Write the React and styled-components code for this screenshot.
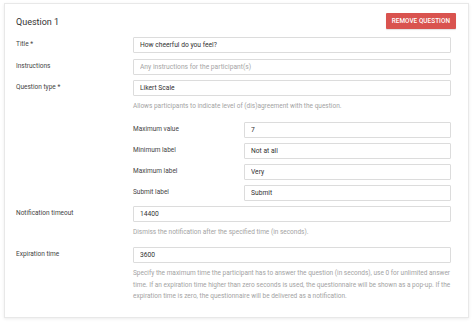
import React from 'react'
import styled, { createGlobalStyle } from 'styled-components'

const GlobalStyle = createGlobalStyle`
	body {
		margin: 0;
		background: #fff;
		font-family: Roboto, "Liberation Sans", sans-serif;
		color: #333;
	}
	* {
		box-sizing: border-box;
	}
`

const nested = [
	{ label: 'Maximum value', value: '7' },
	{ label: 'Minimum label', value: 'Not at all' },
	{ label: 'Maximum label', value: 'Very' },
	{ label: 'Submit label', value: 'Submit' },
]

const App = () => {
	return (
		<Page>
			<GlobalStyle />
			<Card>
				<Header>
					<Title>Question 1</Title>
					<RemoveButton>REMOVE QUESTION</RemoveButton>
				</Header>
				<Fields>
					<Field>
						<Label>Title *</Label>
						<Control>
							<Input defaultValue="How cheerful do you feel?" />
						</Control>
					</Field>
					<Field>
						<Label>Instructions</Label>
						<Control>
							<Input placeholder="Any instructions for the participant(s)" />
						</Control>
					</Field>
					<Field>
						<Label>Question type *</Label>
						<Control>
							<Input defaultValue="Likert Scale" />
							<Help>Allows participants to indicate level of (dis)agreement with the question.</Help>
							<Nested>
								{ nested.map((item, i) => (
									<NestedRow key={ 'n' + i }>
										<Label>{ item.label }</Label>
										<Input defaultValue={ item.value } />
									</NestedRow>
								)) }
							</Nested>
						</Control>
					</Field>
					<Field>
						<Label>Notification timeout</Label>
						<Control>
							<Input defaultValue="14400" />
							<Help>Dismiss the notification after the specified time (in seconds).</Help>
						</Control>
					</Field>
					<Field>
						<Label>Expiration time</Label>
						<Control>
							<Input defaultValue="3600" />
							<Help $multi>
								Specify the maximum time the participant has to answer the question (in seconds), use 0 for unlimited answer time. If an expiration time higher than zero seconds is used, the questionnaire will be shown as a pop-up. If the expiration time is zero, the questionnaire will be delivered as a notification.
							</Help>
						</Control>
					</Field>
				</Fields>
			</Card>
		</Page>
	)
}

export default App

const Page = styled.div`
	padding: 3px 5px 4px 4px;
`

const Card = styled.div`
	background: #fff;
	border: 1px solid #e8e8e8;
	box-shadow: 0 1px 3px rgba(0, 0, 0, 0.08);
	padding: 9px 17px 14px 11px;
`

const Header = styled.div`
	display: flex;
	align-items: center;
	justify-content: space-between;
	height: 16px;
	margin-right: -5px;
	margin-bottom: 8px;
`

const Title = styled.div`
	font-size: 9px;
	color: #333;
	padding-top: 2px;
`

const RemoveButton = styled.button`
	height: 16px;
	padding: 0 6px;
	border: 0;
	border-radius: 1px;
	background: #d9534f;
	color: #fff;
	font-family: Roboto, "Liberation Sans", sans-serif;
	font-size: 6.4px;
	font-weight: 500;
	letter-spacing: 0.05px;
	box-shadow: 0 1px 1px rgba(0, 0, 0, 0.12);
`

const Fields = styled.div`
	display: flex;
	flex-direction: column;
	gap: 5.5px;
`

const Field = styled.div`
	display: grid;
	grid-template-columns: 117px 1fr;
`

const Label = styled.div`
	font-size: 6.5px;
	color: #444;
	padding-top: 3px;
`

const Control = styled.div`
	display: flex;
	flex-direction: column;
`

const Input = styled.input`
	width: 100%;
	height: 16px;
	padding: 0 6px;
	border: 1px solid #dcdcdc;
	border-radius: 1px;
	font-family: Roboto, "Liberation Sans", sans-serif;
	font-size: 6.7px;
	color: #333;
	outline: none;

	&::placeholder {
		color: #a5a5a5;
	}
`

const Help = styled.div`
	font-size: 6.5px;
	line-height: ${ p => p.$multi ? '11.5px' : '10px' };
	color: #a3a3a3;
	margin-top: 5px;
	margin-bottom: ${ p => p.$multi ? '0' : '4.5px' };
`

const Nested = styled.div`
	display: flex;
	flex-direction: column;
	gap: 5px;
	margin-top: 6px;
`

const NestedRow = styled.div`
	display: grid;
	grid-template-columns: 111px 1fr;
	height: 16px;
`
